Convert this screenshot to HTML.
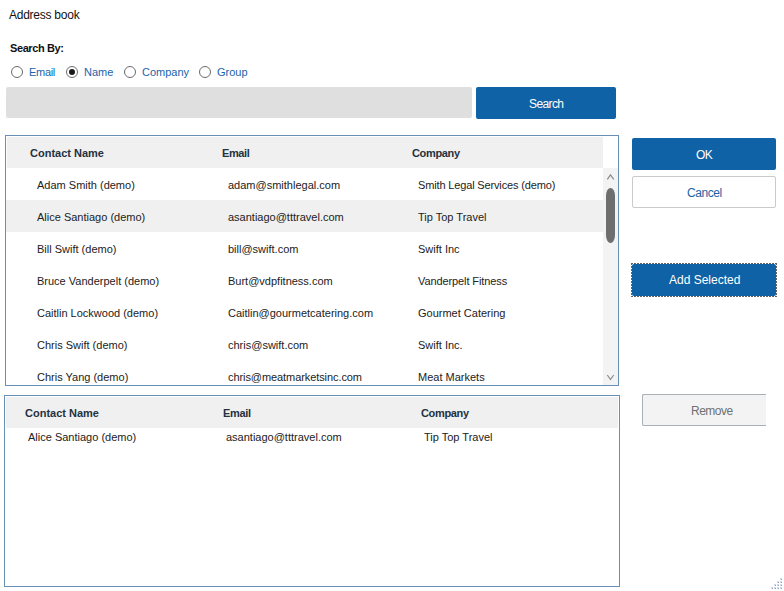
<!DOCTYPE html>
<html><head><meta charset="utf-8">
<style>
html,body{margin:0;padding:0;background:#fff;width:784px;height:591px;overflow:hidden;position:relative;font-family:"Liberation Sans",sans-serif;}
.a{position:absolute;}
.t{position:absolute;white-space:nowrap;line-height:12px;font-size:11px;color:#222;}
.btn{position:absolute;box-sizing:border-box;border-radius:2px;}
.blue{background:#0f62a5;}
.radio{position:absolute;width:12px;height:12px;box-sizing:border-box;border:1px solid #6b6b6b;border-radius:50%;}
.rl{color:#1a63ab;}
.hd{font-weight:bold;color:#243240;}
</style></head><body>

<div class="t" style="left:9px;top:9px;font-size:12px;color:#111;letter-spacing:-0.25px;">Address book</div>
<div class="t hd" style="left:10px;top:42px;color:#111;letter-spacing:-0.4px;">Search By:</div>

<div class="radio" style="left:11px;top:66px;"></div>
<div class="t rl" style="left:29px;top:66px;letter-spacing:-0.3px;">Email</div>
<div class="radio" style="left:66px;top:66px;"><div class="a" style="left:2px;top:2px;width:6px;height:6px;border-radius:50%;background:#1a1a1a;"></div></div>
<div class="t rl" style="left:84px;top:66px;">Name</div>
<div class="radio" style="left:124px;top:66px;"></div>
<div class="t rl" style="left:142px;top:66px;">Company</div>
<div class="radio" style="left:199px;top:66px;"></div>
<div class="t rl" style="left:217px;top:66px;">Group</div>

<div class="btn" style="left:6px;top:87px;width:466px;height:31px;background:#dfdfdf;"></div>
<div class="btn blue" style="left:476px;top:87px;width:140px;height:32px;"></div>
<div class="t" style="left:529px;top:98px;color:#fff;font-size:12px;letter-spacing:-0.6px;">Search</div>

<!-- upper list -->
<div class="a" style="left:5px;top:135px;width:614px;height:251px;box-sizing:border-box;border:1px solid #6890b6;background:#fff;overflow:hidden;">
  <div class="a" style="left:1px;top:1px;width:596px;height:31px;background:#f0f0f0;"></div>
  <div class="a" style="left:0px;top:64px;width:597px;height:32px;background:#f0f0f0;"></div>
  <div class="a" style="left:597px;top:32px;width:15px;height:217px;background:#f3f3f3;"></div>
</div>
<div class="t hd" style="left:30px;top:147px;">Contact Name</div>
<div class="t hd" style="left:222px;top:147px;letter-spacing:-0.4px;">Email</div>
<div class="t hd" style="left:412px;top:147px;letter-spacing:-0.35px;">Company</div>

<div class="t" style="left:37px;top:179px;">Adam Smith (demo)</div>
<div class="t" style="left:228px;top:179px;">adam@smithlegal.com</div>
<div class="t" style="left:418px;top:179px;letter-spacing:-0.15px;">Smith Legal Services (demo)</div>

<div class="t" style="left:37px;top:211px;">Alice Santiago (demo)</div>
<div class="t" style="left:228px;top:211px;">asantiago@tttravel.com</div>
<div class="t" style="left:418px;top:211px;">Tip Top Travel</div>

<div class="t" style="left:37px;top:243px;">Bill Swift (demo)</div>
<div class="t" style="left:228px;top:243px;">bill@swift.com</div>
<div class="t" style="left:418px;top:243px;">Swift Inc</div>

<div class="t" style="left:37px;top:275px;">Bruce Vanderpelt (demo)</div>
<div class="t" style="left:228px;top:275px;">Burt@vdpfitness.com</div>
<div class="t" style="left:418px;top:275px;letter-spacing:-0.1px;">Vanderpelt Fitness</div>

<div class="t" style="left:37px;top:307px;">Caitlin Lockwood (demo)</div>
<div class="t" style="left:228px;top:307px;">Caitlin@gourmetcatering.com</div>
<div class="t" style="left:418px;top:307px;">Gourmet Catering</div>

<div class="t" style="left:37px;top:339px;">Chris Swift (demo)</div>
<div class="t" style="left:228px;top:339px;">chris@swift.com</div>
<div class="t" style="left:418px;top:339px;">Swift Inc.</div>

<div class="t" style="left:37px;top:371px;">Chris Yang (demo)</div>
<div class="t" style="left:228px;top:371px;letter-spacing:-0.08px;">chris@meatmarketsinc.com</div>
<div class="t" style="left:418px;top:371px;">Meat Markets</div>

<!-- scrollbar -->
<svg class="a" style="left:603px;top:168px;" width="15" height="217">
  <path d="M4.3 11.3 L7.5 6.8 L10.7 11.3" fill="none" stroke="#8c8c8c" stroke-width="1.2"/>
  <path d="M3 28 A4.5 8 0 0 1 12 28 L12 67 A4.5 8 0 0 1 3 67 Z" fill="#6e6e6e"/>
  <path d="M4.3 207 L7.5 211.5 L10.7 207" fill="none" stroke="#8c8c8c" stroke-width="1.2"/>
</svg>

<!-- lower list -->
<div class="a" style="left:4px;top:395px;width:616px;height:192px;box-sizing:border-box;border:1px solid #6890b6;background:#fff;">
  <div class="a" style="left:1px;top:1px;width:612px;height:31px;background:#f0f0f0;"></div>
</div>
<div class="t hd" style="left:25px;top:407px;">Contact Name</div>
<div class="t hd" style="left:223px;top:407px;letter-spacing:-0.3px;">Email</div>
<div class="t hd" style="left:421px;top:407px;letter-spacing:-0.35px;">Company</div>
<div class="t" style="left:28px;top:431px;">Alice Santiago (demo)</div>
<div class="t" style="left:226px;top:431px;">asantiago@tttravel.com</div>
<div class="t" style="left:424px;top:431px;">Tip Top Travel</div>

<!-- right buttons -->
<div class="btn blue" style="left:632px;top:138px;width:144px;height:32px;"></div>
<div class="t" style="left:696px;top:149px;color:#fff;font-size:12px;letter-spacing:-0.5px;">OK</div>
<div class="btn" style="left:632px;top:176px;width:144px;height:32px;border:1px solid #cacaca;background:#fff;"></div>
<div class="t" style="left:687px;top:187px;color:#1d62a6;font-size:12px;letter-spacing:-0.45px;">Cancel</div>

<div class="a" style="left:632px;top:264px;width:144px;height:32px;background:#0f62a5;border-radius:2px;"></div>
<div class="a" style="left:631px;top:263px;width:146px;height:1px;background:repeating-linear-gradient(90deg,#646464 0 2px,#fff 2px 3px);"></div>
<div class="a" style="left:631px;top:296px;width:146px;height:1px;background:repeating-linear-gradient(90deg,#646464 0 2px,#fff 2px 3px);"></div>
<div class="a" style="left:631px;top:263px;width:1px;height:34px;background:repeating-linear-gradient(180deg,#646464 0 2px,#fff 2px 3px);"></div>
<div class="a" style="left:776px;top:263px;width:1px;height:34px;background:repeating-linear-gradient(180deg,#646464 0 2px,#fff 2px 3px);"></div>
<div class="t" style="left:669px;top:274px;color:#fff;font-size:12px;">Add Selected</div>

<div class="a" style="left:642px;top:394px;width:124px;height:32px;box-sizing:border-box;border:1px solid #aab0b4;border-right:none;border-radius:2px 0 0 2px;background:#f3f3f3;"></div>
<div class="t" style="left:691px;top:405px;color:#707070;font-size:12px;letter-spacing:-0.5px;">Remove</div>

<!-- grip -->
<svg class="a" style="left:770px;top:577px;" width="14" height="14">
<rect x="10" y="1" width="2" height="2" fill="#d3dbea"/><rect x="11" y="2" width="1" height="1" fill="#8e9fc2"/><rect x="7" y="4" width="2" height="2" fill="#d3dbea"/><rect x="8" y="5" width="1" height="1" fill="#8e9fc2"/><rect x="10" y="4" width="2" height="2" fill="#d3dbea"/><rect x="11" y="5" width="1" height="1" fill="#8e9fc2"/><rect x="4" y="7" width="2" height="2" fill="#d3dbea"/><rect x="5" y="8" width="1" height="1" fill="#8e9fc2"/><rect x="7" y="7" width="2" height="2" fill="#d3dbea"/><rect x="8" y="8" width="1" height="1" fill="#8e9fc2"/><rect x="10" y="7" width="2" height="2" fill="#d3dbea"/><rect x="11" y="8" width="1" height="1" fill="#8e9fc2"/><rect x="1" y="10" width="2" height="2" fill="#d3dbea"/><rect x="2" y="11" width="1" height="1" fill="#8e9fc2"/><rect x="4" y="10" width="2" height="2" fill="#d3dbea"/><rect x="5" y="11" width="1" height="1" fill="#8e9fc2"/><rect x="7" y="10" width="2" height="2" fill="#d3dbea"/><rect x="8" y="11" width="1" height="1" fill="#8e9fc2"/><rect x="10" y="10" width="2" height="2" fill="#d3dbea"/><rect x="11" y="11" width="1" height="1" fill="#8e9fc2"/>
</svg>
</body></html>
